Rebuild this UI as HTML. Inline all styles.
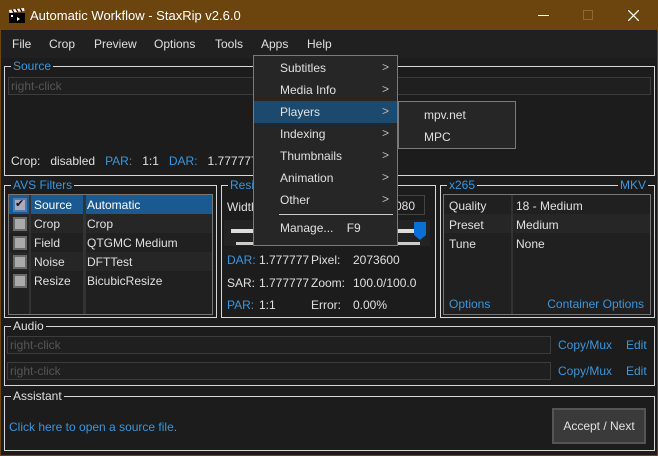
<!DOCTYPE html>
<html><head><style>
*{margin:0;padding:0;box-sizing:border-box}
body{width:658px;height:456px;background:#1c1c1c;font-family:"Liberation Sans",sans-serif;font-size:12px;color:#e0e0e0;position:relative;overflow:hidden}
.a{position:absolute;white-space:nowrap}
.b{color:#3a96dd}
.g{position:absolute;border:1px solid #d8d8d8}
.lbl{position:absolute;top:-8px;left:6px;background:#1c1c1c;padding:0 2px;line-height:14px}
.tb{position:absolute;border:1px solid #3c3c3c;background:#1f1f1f;color:#555;padding-left:2px;line-height:16px}
.mi{position:absolute;left:26px}
.ar{position:absolute;left:128px;color:#bbb}
.cb{position:absolute;left:4px;width:14px;height:14px;background:#aaa;border:2px solid #6a6a6a}
</style></head><body>
<div class="a" style="left:0;top:0;width:658px;height:30px;background:#6b440e"></div>
<svg class="a" style="left:8px;top:8px" width="18" height="16" viewBox="0 0 18 16"><rect x="1" y="5" width="16" height="10" fill="#000"/><path d="M1 2l15-2 .5 3-15 2z" fill="#fff"/><path d="M4 1.6l2 3M8 1l2 3M12 .5l2 3" stroke="#000" stroke-width="1.2"/><rect x="3" y="7" width="2" height="2" fill="#fff"/><path d="M9 9l3 2-3 2z" fill="#fff"/></svg>
<div class="a" style="left:30px;top:8px;font-size:13px;color:#fff">Automatic Workflow - StaxRip v2.6.0</div>
<div class="a" style="left:538px;top:15px;width:11px;height:1px;background:#fff"></div>
<div class="a" style="left:583px;top:10px;width:10px;height:10px;border:1px solid #8a6a3a"></div>
<svg class="a" style="left:628px;top:10px" width="11" height="11"><path d="M0 0L11 11M11 0L0 11" stroke="#fff" stroke-width="1.3"/></svg>
<div class="a" style="left:0;top:30px;width:658px;height:28px;background:#202020"></div>
<div class="a" style="top:37px;left:12px">File</div>
<div class="a" style="top:37px;left:49px">Crop</div>
<div class="a" style="top:37px;left:94px">Preview</div>
<div class="a" style="top:37px;left:154px">Options</div>
<div class="a" style="top:37px;left:215px">Tools</div>
<div class="a" style="top:37px;left:261px">Apps</div>
<div class="a" style="top:37px;left:307px">Help</div>

<div class="g" style="left:4px;top:66px;width:651px;height:110px"><span class="lbl b">Source</span></div>
<div class="tb" style="left:8px;top:77px;width:643px;height:18px">right-click</div>
<div class="a" style="top:154px;left:11px">Crop:&nbsp;&nbsp;&nbsp;disabled&nbsp;&nbsp;&nbsp;<span class="b">PAR:</span>&nbsp;&nbsp;&nbsp;1:1&nbsp;&nbsp;&nbsp;<span class="b">DAR:</span>&nbsp;&nbsp;&nbsp;1.777777</div>

<div class="g" style="left:4px;top:185px;width:213px;height:133px"><span class="lbl b">AVS Filters</span></div>
<div class="a" style="left:8px;top:194px;width:205px;height:121px;border:1px solid #777;background:#202020">
<div class="a" style="left:0;top:0;width:203px;height:19px;background:#1a5a92"></div>
<div class="a" style="left:0;top:19px;width:203px;height:19px;background:#262626"></div>
<div class="a" style="left:0;top:57px;width:203px;height:19px;background:#262626"></div>
<div class="a" style="left:20px;top:0;width:2px;height:119px;background:#333"></div>
<div class="a" style="left:74px;top:0;width:3px;height:119px;background:#333"></div>
<div class="cb" style="top:3px;background:#aab;border-color:#4a7ab0"></div><div class="a" style="left:6px;top:2px;color:#112;font-size:11px">✔</div>
<div class="cb" style="top:22px"></div><div class="cb" style="top:41px"></div><div class="cb" style="top:60px"></div><div class="cb" style="top:79px"></div>
<div class="a" style="left:25px;top:3px;color:#fff">Source</div><div class="a" style="left:78px;top:3px;color:#fff">Automatic</div>
<div class="a" style="left:25px;top:22px">Crop</div><div class="a" style="left:78px;top:22px">Crop</div>
<div class="a" style="left:25px;top:41px">Field</div><div class="a" style="left:78px;top:41px">QTGMC Medium</div>
<div class="a" style="left:25px;top:60px">Noise</div><div class="a" style="left:78px;top:60px">DFTTest</div>
<div class="a" style="left:25px;top:79px">Resize</div><div class="a" style="left:78px;top:79px">BicubicResize</div>
</div>

<div class="g" style="left:221px;top:185px;width:215px;height:133px"><span class="lbl b">Resize</span></div>
<div class="a" style="left:227px;top:200px">Width</div>
<div class="a" style="left:380px;top:195px;width:45px;height:20px;border:1px solid #444;padding:3px 0 0 14px">080</div>
<div class="a" style="left:224px;top:220px;width:206px;height:26px;background:#232323"></div>
<div class="a" style="left:231px;top:229px;width:190px;height:4px;background:#ddd"></div>
<div class="a" style="left:236px;top:242px;width:184px;height:3px;background:#ccc"></div>
<svg class="a" style="left:414px;top:222px" width="12" height="18"><path d="M0 0H12V13L6 18L0 13Z" fill="#0a6fd6"/></svg>
<div class="a" style="left:227px;top:253px"><span class="b">DAR:</span></div><div class="a" style="left:259px;top:253px">1.777777</div><div class="a" style="left:311px;top:253px">Pixel:</div><div class="a" style="left:353px;top:253px">2073600</div>
<div class="a" style="left:227px;top:276px">SAR:</div><div class="a" style="left:259px;top:276px">1.777777</div><div class="a" style="left:311px;top:276px">Zoom:</div><div class="a" style="left:353px;top:276px">100.0/100.0</div>
<div class="a" style="left:227px;top:298px"><span class="b">PAR:</span></div><div class="a" style="left:259px;top:298px">1:1</div><div class="a" style="left:311px;top:298px">Error:</div><div class="a" style="left:353px;top:298px">0.00%</div>

<div class="g" style="left:440px;top:185px;width:215px;height:133px"><span class="lbl b">x265</span><span class="lbl b" style="left:auto;right:6px">MKV</span></div>
<div class="a" style="left:443px;top:194px;width:208px;height:121px;border:1px solid #777;background:#202020">
<div class="a" style="left:0;top:19px;width:206px;height:19px;background:#262626"></div>
<div class="a" style="left:67px;top:0;width:2px;height:119px;background:#333"></div>
<div class="a" style="left:5px;top:4px">Quality</div><div class="a" style="left:72px;top:4px">18 - Medium</div>
<div class="a" style="left:5px;top:23px">Preset</div><div class="a" style="left:72px;top:23px">Medium</div>
<div class="a" style="left:5px;top:42px">Tune</div><div class="a" style="left:72px;top:42px">None</div>
<div class="a b" style="left:5px;top:102px">Options</div><div class="a b" style="right:6px;top:102px">Container Options</div>
</div>

<div class="g" style="left:4px;top:326px;width:651px;height:60px"><span class="lbl">Audio</span></div>
<div class="tb" style="left:7px;top:336px;width:544px;height:18px">right-click</div>
<div class="tb" style="left:7px;top:362px;width:544px;height:18px">right-click</div>
<div class="a b" style="left:558px;top:338px">Copy/Mux</div><div class="a b" style="left:626px;top:338px">Edit</div>
<div class="a b" style="left:558px;top:364px">Copy/Mux</div><div class="a b" style="left:626px;top:364px">Edit</div>

<div class="g" style="left:4px;top:396px;width:651px;height:55px"><span class="lbl">Assistant</span></div>
<div class="a b" style="left:9px;top:420px">Click here to open a source file.</div>
<div class="a" style="left:552px;top:408px;width:94px;height:36px;background:#3a3a3a;border:2px solid #555;text-align:center;line-height:32px">Accept / Next</div>

<div class="a" style="left:253px;top:55px;width:145px;height:191px;background:#262626;border:1px solid #7a7a7a">
<div class="a" style="left:0;top:45px;width:143px;height:22px;background:#1c4a6e"></div>
<div class="mi" style="top:5px">Subtitles</div><div class="ar" style="top:4px">&gt;</div>
<div class="mi" style="top:27px">Media Info</div><div class="ar" style="top:26px">&gt;</div>
<div class="mi" style="top:49px">Players</div><div class="ar" style="top:48px">&gt;</div>
<div class="mi" style="top:71px">Indexing</div><div class="ar" style="top:70px">&gt;</div>
<div class="mi" style="top:93px">Thumbnails</div><div class="ar" style="top:92px">&gt;</div>
<div class="mi" style="top:115px">Animation</div><div class="ar" style="top:114px">&gt;</div>
<div class="mi" style="top:137px">Other</div><div class="ar" style="top:136px">&gt;</div>
<div class="a" style="left:25px;top:158px;width:114px;height:1px;background:#ccc"></div>
<div class="mi" style="top:165px">Manage...&nbsp;&nbsp;&nbsp;&nbsp;F9</div>
</div>
<div class="a" style="left:398px;top:101px;width:118px;height:48px;background:#262626;border:1px solid #7a7a7a">
<div class="a" style="left:25px;top:6px">mpv.net</div>
<div class="a" style="left:25px;top:28px">MPC</div>
</div>
<div class="a" style="left:0;top:0;width:658px;height:456px;border:1px solid #6b440e"></div>
</body></html>
